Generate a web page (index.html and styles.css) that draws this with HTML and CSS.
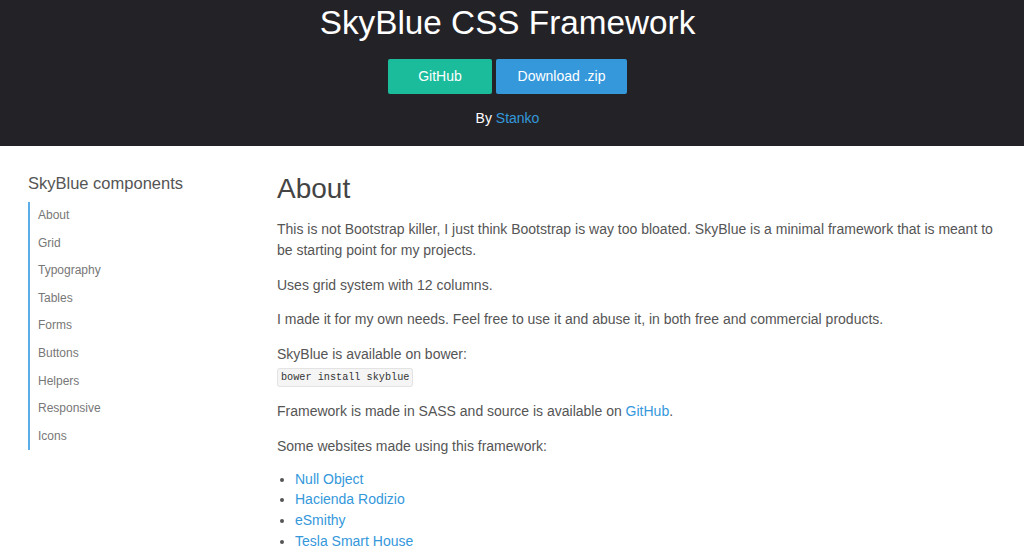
FILE: index.html
```html
<!DOCTYPE html>
<html lang="en">
<head>
<meta charset="utf-8">
<title>SkyBlue CSS Framework</title>
<link rel="stylesheet" href="styles.css">
</head>
<body>
<header class="hero">
  <h1 class="hero-title">SkyBlue CSS Framework</h1>
  <div class="hero-buttons">
    <a class="btn btn-green" href="#">GitHub</a>
    <a class="btn btn-blue" href="#">Download .zip</a>
  </div>
  <p class="hero-by">By <a href="#">Stanko</a></p>
</header>
<div class="layout">
  <aside class="sidebar">
    <h3 class="sidebar-title">SkyBlue components</h3>
    <ul class="side-nav">
      <li><a href="#">About</a></li>
      <li><a href="#">Grid</a></li>
      <li><a href="#">Typography</a></li>
      <li><a href="#">Tables</a></li>
      <li><a href="#">Forms</a></li>
      <li><a href="#">Buttons</a></li>
      <li><a href="#">Helpers</a></li>
      <li><a href="#">Responsive</a></li>
      <li><a href="#">Icons</a></li>
    </ul>
  </aside>
  <main class="content">
    <h2 class="content-title">About</h2>
    <p>This is not Bootstrap killer, I just think Bootstrap is way too bloated. SkyBlue is a minimal framework that is meant to be starting point for my projects.</p>
    <p>Uses grid system with 12 columns.</p>
    <p>I made it for my own needs. Feel free to use it and abuse it, in both free and commercial products.</p>
    <p>SkyBlue is available on bower:<br><code class="code">bower install skyblue</code></p>
    <p>Framework is made in SASS and source is available on <a href="#">GitHub</a>.</p>
    <p class="lead-in">Some websites made using this framework:</p>
    <ul class="sites">
      <li><a href="#">Null Object</a></li>
      <li><a href="#">Hacienda Rodizio</a></li>
      <li><a href="#">eSmithy</a></li>
      <li><a href="#">Tesla Smart House</a></li>
    </ul>
  </main>
</div>
</body>
</html>
```

FILE: styles.css
```css
html, body {
  margin: 0;
  padding: 0;
}
body {
  font-family: "Liberation Sans", Arial, sans-serif;
  font-size: 14px;
  line-height: 21px;
  color: #555;
  background: #fff;
}
a {
  color: #3498db;
  text-decoration: none;
}
.hero {
  background: #232327;
  color: #fff;
  text-align: center;
  padding: 3px 9px 17px 0;
}
.hero-title {
  margin: 0 0 16px;
  font-size: 33.3px;
  line-height: 40px;
  font-weight: normal;
}
.hero-buttons {
  display: flex;
  justify-content: center;
  gap: 4px;
}
.btn {
  display: block;
  height: 35px;
  line-height: 35px;
  font-size: 14px;
  color: #fff;
  border-radius: 2px;
  text-align: center;
  box-sizing: border-box;
}
.btn-green {
  background: #1abc9c;
  width: 104px;
}
.btn-blue {
  background: #3498db;
  width: 131px;
}
.hero-by {
  margin: 14px 0 0;
  line-height: 21px;
}
.layout {
  display: grid;
  grid-template-columns: 249px 1fr;
  padding: 27px 28px 0 28px;
}
.sidebar-title {
  margin: 0 0 9px;
  font-size: 16.5px;
  line-height: 20px;
  font-weight: normal;
  color: #555;
}
.side-nav {
  list-style: none;
  margin: 0;
  padding: 0 0 0 8px;
  border-left: 2px solid #5aade6;
}
.side-nav li {
  font-size: 12px;
  line-height: 27.6px;
}
.side-nav a {
  color: #777;
}
.content-title {
  margin: 0 0 14px;
  font-size: 28px;
  line-height: 32px;
  font-weight: normal;
  color: #444;
}
.content p {
  margin: 0 0 13.5px;
}
.content .lead-in {
  margin-bottom: 12px;
}
.code {
  font-family: "Liberation Mono", "DejaVu Sans Mono", monospace;
  font-size: 10.2px;
  color: #333;
  background: #f5f5f5;
  border: 1px solid #e3e3e3;
  border-radius: 3px;
  padding: 3px 3px;
}
.sites {
  margin: 0;
  padding: 0 0 0 18px;
}
.sites li {
  line-height: 20.7px;
}
```
